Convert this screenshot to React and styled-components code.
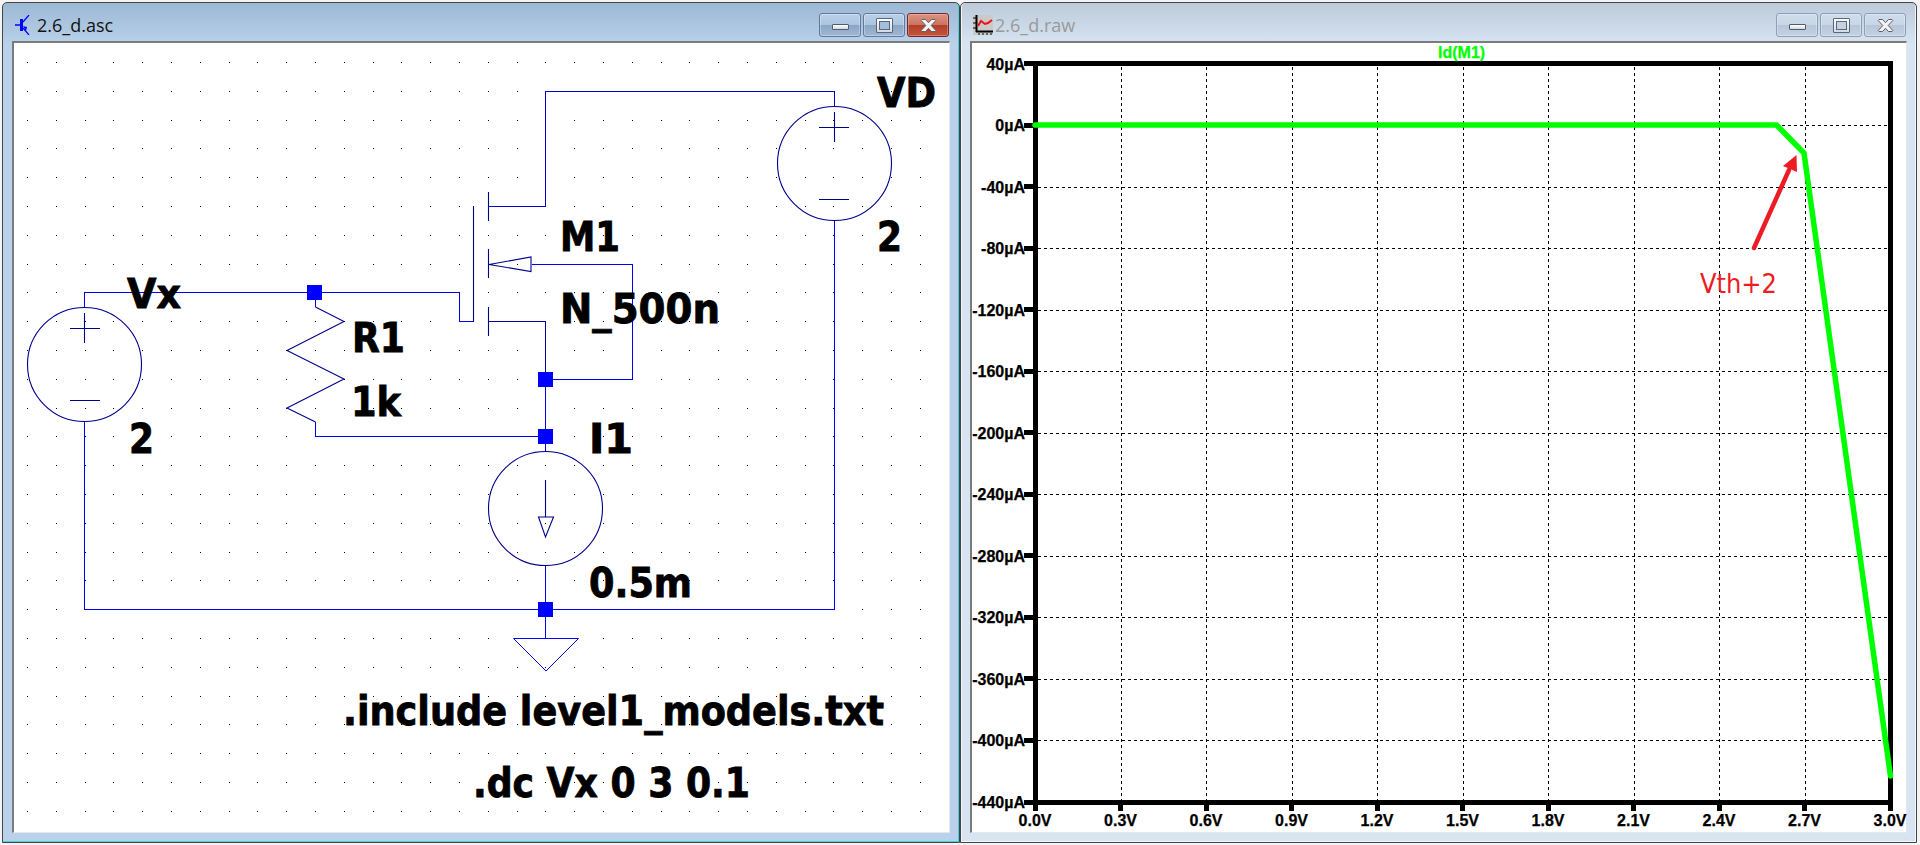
import React from 'react'
import styled, { createGlobalStyle } from 'styled-components'

const GlobalStyle = createGlobalStyle`
  html, body { margin: 0; padding: 0; background: #fff; }
  body { font-family: "Open Sans", "Liberation Sans", sans-serif; }
`

const Desktop = styled.div`
  display: flex;
  width: 1920px;
  height: 845px;
  padding: 2px 3px 2px 2px;
  box-sizing: border-box;
  background: #f4f4f4;
  overflow: hidden;
`
const Window = styled.div`
  display: flex;
  flex-direction: column;
  width: ${p => p.$width}px;
  height: 841px;
  box-sizing: border-box;
  padding: 0 9px 9px;
  border: 1px solid #454545;
  border-radius: 5px 5px 0 0;
  background: linear-gradient(${p => p.$active ? '#9db8d4, #b9d1ea 41px' : '#bccad9, #d7e4f2 41px'});
  box-shadow: ${p => p.$active ? 'inset -1px -1px 0 #44d3da' : 'inset -1px -1px 0 #f2f6fb, inset 1px 0 0 #f2f6fb'};
`
const TitleBar = styled.div`
  display: flex;
  align-items: center;
  flex: none;
  height: 38px;
  padding-top: 6px;
  box-sizing: border-box;
`
const TitleIcon = styled.svg`
  flex: none;
  width: 20px;
  height: 20px;
  margin-left: 3px;
`
const Title = styled.span`
  margin-left: 2px;
  font-size: 18px;
  line-height: 24px;
  color: ${p => p.$active ? '#131313' : '#9a9a9a'};
`
const Controls = styled.div`
  display: flex;
  gap: 2px;
  margin-left: auto;
  margin-right: 1px;
`
const CtrlButton = styled.div`
  display: flex;
  align-items: center;
  justify-content: center;
  width: 42px;
  height: 24px;
  box-sizing: border-box;
  border-radius: 3px;
  border: 1px solid ${p => p.$close ? '#70282c' : p.$active ? '#64799a' : '#8d9eb8'};
  box-shadow: inset 0 0 0 1px ${p => p.$close ? 'rgba(255,210,200,.35)' : 'rgba(255,255,255,.3)'};
  background: ${p => p.$close
    ? 'linear-gradient(#dc9482, #cb7460 48%, #b43f28 52%, #c4543b)'
    : p.$active
      ? 'linear-gradient(#b9d0e8, #adc6e0 48%, #8ca7c6 52%, #9db7d4)'
      : 'linear-gradient(#d0dcea, #c8d6e6 48%, #b6c5d9 52%, #c4d2e3)'};
`
const MinGlyph = styled.div`
  width: 17px;
  height: 6px;
  box-sizing: border-box;
  border: 1px solid #4f5d72;
  border-radius: 1px;
  background: linear-gradient(#fff, #d5d9df);
  margin-top: 3px;
`
const MaxGlyph = styled.div`
  width: 17px;
  height: 15px;
  box-sizing: border-box;
  border: 1px solid #59677c;
  border-radius: 1px;
  background: linear-gradient(#fff, #d5d9df);
  display: flex;
  align-items: center;
  justify-content: center;
`
const MaxHole = styled.div`
  width: 9px;
  height: 7px;
  border: 1px solid #59677c;
  background: ${p => p.$active ? '#a5bedb' : '#c4d2e3'};
`
const CloseGlyph = styled.svg`
  width: 19px;
  height: 15px;
`
const Client = styled.div`
  flex: 1;
  display: flex;
  min-height: 0;
  background: #fff;
  border-top: 2px solid #7b7b7b;
  border-left: 2px solid #7b7b7b;
  border-right: 1px solid #e4e8ec;
  border-bottom: 1px solid #e4e8ec;
`
const Canvas = styled.svg`
  display: block;
  flex: none;
`
const SchLabel = styled.text`
  font-family: "DejaVu Sans", "Liberation Sans", sans-serif;
  font-stretch: condensed;
  font-weight: 700;
  font-size: 41px;
  fill: #000;
  stroke: #000;
  stroke-width: 0.8px;
`
const AxisLabel = styled.text`
  font-family: "Liberation Sans", Arial, sans-serif;
  font-weight: 700;
  font-size: 16px;
  fill: ${p => p.$color || '#000'};
  stroke: ${p => p.$color || '#000'};
  stroke-width: 0.25px;
`
const Note = styled.text`
  font-family: "DejaVu Sans", sans-serif;
  font-stretch: condensed;
  font-size: 26px;
  fill: #ed1c24;
`

const WindowButtons = ({ active, closeHot }) => (
  <Controls>
    <CtrlButton $active={active}><MinGlyph /></CtrlButton>
    <CtrlButton $active={active}><MaxGlyph><MaxHole $active={active} /></MaxGlyph></CtrlButton>
    <CtrlButton $active={active} $close={closeHot}>
      <CloseGlyph viewBox="0 0 19 15">
        <path d="M3 1.5h3.5l3 3.2 3-3.2H16l.8 1-4.6 5 4.6 5-.8 1h-3.5l-3-3.2-3 3.2H3l-.8-1 4.6-5-4.6-5z" fill="#f3f3f3" stroke="#5d5f68" strokeWidth="1" />
      </CloseGlyph>
    </CtrlButton>
  </Controls>
)

const TransistorIcon = () => (
  <TitleIcon viewBox="0 0 20 20">
    <g stroke="#0000ff" fill="none">
      <path d="M0 10h6" strokeWidth="1.5" />
      <path d="M6.500 4v12" strokeWidth="3" />
      <path d="M8 7l6-7M8 13l6 7" strokeWidth="1.2" />
    </g>
    <path d="M8 11l4 1-1 4z" fill="#0000ff" />
  </TitleIcon>
)

const ChartIcon = () => (
  <TitleIcon viewBox="0 0 20 20">
    <rect width="20" height="20" fill="#c9c9c9" />
    <path d="M3.500 0v17M3 16.500h17" stroke="#000" strokeWidth="2" fill="none" />
    <path d="M0 3h3M0 8h3M0 13h3M6 18v2M10 18v2M14 18v2M18 18v2" stroke="#000" fill="none" />
    <path d="M5 11l3-5 4 3 3-1 4-3" stroke="#f01010" strokeWidth="2" fill="none" />
  </TitleIcon>
)

// grid dots, 28.8px pitch
const dots = []
for (let i = 0; i < 32; i++) {
  for (let j = 0; j < 27; j++) {
    dots.push([Math.round(27 + 28.8 * i), Math.round(62 + 28.8 * j)])
  }
}

const nodes = [[315, 292], [546, 379], [546, 436], [546, 609]]

const labels = [
  ['VD', 877, 107, 59],
  ['2', 877, 251, 25],
  ['Vx', 127, 308, 54],
  ['R1', 352, 352, 53],
  ['1k', 351, 416, 50],
  ['2', 129, 453, 25],
  ['M1', 560, 251, 60],
  ['N_500n', 560, 323, 160],
  ['I1', 589, 453, 44],
  ['0.5m', 589, 597, 103],
  ['.include level1_models.txt', 343, 725, 541],
  ['.dc Vx 0 3 0.1', 473, 797, 277],
]

const Schematic = () => (
  <Canvas width="935" height="789" viewBox="14 43 935 789">
    {dots.map(([x, y]) => <rect key={x + '-' + y} x={x} y={y} width="1" height="1" fill="#000" />)}

    <g fill="none" stroke="#0000f0" shapeRendering="crispEdges">
      <path d="M84.500 307V292.500H459.500V321.500H473.500" />
      <path d="M84.500 421V609.500H834.500V221" />
      <path d="M546 379.500H632.500V264.500H532" />
      <path d="M315.500 292V307M315.500 422V436.500H546" />
      <path d="M545.500 379V452M545.500 565V638" />
    </g>
    <path d="M834.500 106V91.500H545.500V206.500H488.500" fill="none" stroke="#0000c8" shapeRendering="crispEdges" />
    <path d="M488.500 321.500H545.500V379" fill="none" stroke="#0000a0" shapeRendering="crispEdges" />
    <path d="M513.500 638.500H578.500L546 671Z" fill="none" stroke="#0000ff" />

    <g fill="none" stroke="#00008c" strokeWidth="1.100">
      {/* voltage source Vx */}
      <circle cx="84.500" cy="364.500" r="57" />
      <path d="M70 328.500H100M84.500 313V343M70 400.500H100" />
      {/* voltage source VD */}
      <circle cx="834.500" cy="163.500" r="57" />
      <path d="M819 127.500H849M834.500 112V142M819 199.500H849" />
      {/* current source */}
      <circle cx="545.500" cy="508.500" r="57" />
      <path d="M545.500 480V517M538.500 517H553.500L545.500 537Z" />
      {/* resistor */}
      <path d="M315.500 307L344 321.500L287 350.500L344 379L287 408L315.500 422" />
      {/* mosfet */}
      <path d="M488.500 192V221M488.500 249V278M488.500 307V336M473.500 206V321.500" />
      <path d="M489 264.500L531 257V271.500Z" />
    </g>

    {nodes.map(([x, y]) => <rect key={x + '-' + y} x={x - 8} y={y - 7} width="15" height="15" fill="#0000ff" />)}

    {labels.map(([text, x, y, w]) => (
      <SchLabel key={text + x} x={x} y={y} textLength={w} lengthAdjust="spacingAndGlyphs">{text}</SchLabel>
    ))}
  </Canvas>
)

const plot = { left: 1035, right: 1890, top: 63.500, bottom: 802 }
const yLabels = ['40µA', '0µA', '-40µA', '-80µA', '-120µA', '-160µA', '-200µA', '-240µA', '-280µA', '-320µA', '-360µA', '-400µA', '-440µA']
const xLabels = ['0.0V', '0.3V', '0.6V', '0.9V', '1.2V', '1.5V', '1.8V', '2.1V', '2.4V', '2.7V', '3.0V']
const yAt = i => plot.top + (plot.bottom - plot.top) / 12 * i
const xAt = i => plot.left + (plot.right - plot.left) / 10 * i

const Plot = () => (
  <Canvas width="935" height="789" viewBox="972 43 935 789">
    <g stroke="#000" strokeDasharray="3 3" shapeRendering="crispEdges">
      {xLabels.slice(1, -1).map((_, i) => (
        <line key={i} x1={Math.round(xAt(i + 1)) + 0.5} x2={Math.round(xAt(i + 1)) + 0.5} y1={plot.top + 3} y2={plot.bottom} />
      ))}
      {yLabels.slice(1, -1).map((_, i) => (
        <line key={i} x1={plot.left + 3} x2={plot.right} y1={Math.round(yAt(i + 1)) + 0.5} y2={Math.round(yAt(i + 1)) + 0.5} />
      ))}
    </g>

    <g stroke="#000" strokeWidth="5" fill="none" shapeRendering="crispEdges">
      <path d="M1035 61V811M1890 61V811M1024 63.500H1892.500M1024 802H1892.500" />
      {yLabels.slice(1, -1).map((_, i) => (
        <line key={i} x1="1024" x2="1035" y1={yAt(i + 1)} y2={yAt(i + 1)} />
      ))}
      {xLabels.slice(1, -1).map((_, i) => (
        <line key={i} x1={xAt(i + 1)} x2={xAt(i + 1)} y1="802" y2="811" />
      ))}
    </g>

    {yLabels.map((t, i) => (
      <AxisLabel key={t} x="1025" y={yAt(i) + 6} textAnchor="end">{t}</AxisLabel>
    ))}
    {xLabels.map((t, i) => (
      <AxisLabel key={t} x={xAt(i)} y="826" textAnchor="middle">{t}</AxisLabel>
    ))}
    <AxisLabel x="1438" y="58" $color="#00ff00">Id(M1)</AxisLabel>

    <path d="M1035 125H1776.500L1804 153L1890.500 776" fill="none" stroke="#00ff00" strokeWidth="5.500" strokeLinecap="round" strokeLinejoin="miter" />

    <path d="M1754 248L1789 170" stroke="#ed1c24" strokeWidth="4.500" strokeLinecap="round" fill="none" />
    <path d="M1796.500 155L1797 172L1783 166Z" fill="#ed1c24" />
    <Note x="1700" y="293" textLength="77" lengthAdjust="spacingAndGlyphs">Vth+2</Note>
  </Canvas>
)

export default function App() {
  return (
    <>
      <GlobalStyle />
      <Desktop>
        <Window $active $width={958}>
          <TitleBar>
            <TransistorIcon />
            <Title $active>2.6_d.asc</Title>
            <WindowButtons active closeHot />
          </TitleBar>
          <Client><Schematic /></Client>
        </Window>
        <Window $width={957}>
          <TitleBar>
            <ChartIcon />
            <Title>2.6_d.raw</Title>
            <WindowButtons />
          </TitleBar>
          <Client><Plot /></Client>
        </Window>
      </Desktop>
    </>
  )
}
